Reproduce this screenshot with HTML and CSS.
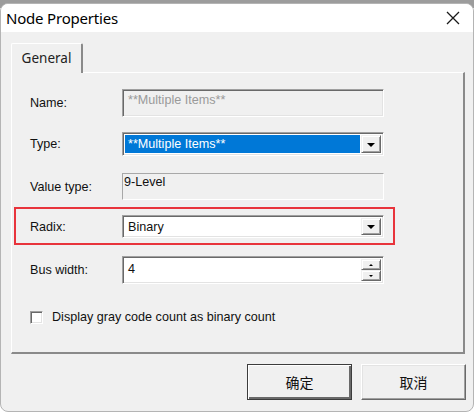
FILE: index.html
```html
<!DOCTYPE html>
<html>
<head>
<meta charset="utf-8">
<link rel="stylesheet" href="styles.css">
</head>
<body>
<div class="window">
  <div class="titlebar">
    <span class="title">Node Properties</span>
    <svg class="close" width="14" height="14" viewBox="0 0 14 14"><path d="M1 1L13 13M13 1L1 13" stroke="#1a1a1a" stroke-width="1.3" fill="none"/></svg>
  </div>
  <div class="content">
    <div class="tabs"><div class="tab">General</div></div>
    <div class="panel">
      <div class="row row-name">
        <span class="label">Name:</span>
        <div class="field sunken disabled"><span class="text-gray">**Multiple Items**</span></div>
      </div>
      <div class="row row-type">
        <span class="label">Type:</span>
        <div class="field sunken combo">
          <div class="combo-value selected">**Multiple Items**</div>
          <div class="btn3d arrow-btn"><span class="tri-down"></span></div>
        </div>
      </div>
      <div class="row row-value">
        <span class="label">Value type:</span>
        <div class="field static"><span>9-Level</span></div>
      </div>
      <div class="row row-radix">
        <span class="label">Radix:</span>
        <div class="field sunken combo">
          <div class="combo-value">Binary</div>
          <div class="btn3d arrow-btn"><span class="tri-down"></span></div>
        </div>
      </div>
      <div class="row row-bus">
        <span class="label">Bus width:</span>
        <div class="field sunken spin">
          <div class="spin-value">4</div>
          <div class="spin-btns">
            <div class="btn3d spin-btn"><span class="tri-up-s"></span></div>
            <div class="btn3d spin-btn"><span class="tri-down-s"></span></div>
          </div>
        </div>
      </div>
      <div class="row row-check">
        <span class="checkbox"></span>
        <span class="check-label">Display gray code count as binary count</span>
      </div>
    </div>
    <div class="buttons">
      <div class="button default">确定</div>
      <div class="button">取消</div>
    </div>
  </div>
</div>
</body>
</html>
```
FILE: styles.css
```css
html, body {
  margin: 0;
  padding: 0;
}
body {
  width: 474px;
  height: 412px;
  overflow: hidden;
  background: linear-gradient(#9c9c9c 0, #9c9c9c 8px, #ffffff 8px);
  font-family: "Liberation Sans", Arial, sans-serif;
  font-size: 12.6px;
  color: #111;
}
.window {
  box-sizing: border-box;
  margin-top: 3px;
  width: 474px;
  height: 409px;
  border: 1px solid #b4b4b4;
  border-radius: 8px;
  background: #f0f0f0;
  overflow: hidden;
  display: flex;
  flex-direction: column;
}
.titlebar {
  height: 28px;
  background: #ffffff;
  display: flex;
  align-items: center;
  justify-content: space-between;
  padding: 0 13px 0 5px;
  flex: none;
}
.title {
  font-family: "Noto Sans", "Open Sans", sans-serif;
  font-size: 15px;
  letter-spacing: -0.2px;
  color: #000;
  margin-top: -1px;
}
.close {
  display: block;
  margin-top: -1px;
}
.content {
  padding: 11px 7px 0 10px;
  display: flex;
  flex-direction: column;
}
.tabs {
  display: flex;
  height: 29px;
}
.tab {
  box-sizing: border-box;
  width: 72px;
  height: 30px;
  border-left: 1px solid #ffffff;
  border-top: 1px solid #ffffff;
  border-right: 2px solid #8a8a8a;
  border-radius: 2px 2px 0 0;
  background: #f0f0f0;
  font-family: "Noto Sans", "Open Sans", sans-serif;
  font-size: 13.5px;
  color: #222;
  display: flex;
  align-items: center;
  justify-content: center;
  padding-bottom: 2px;
  position: relative;
  z-index: 1;
}
.panel {
  box-sizing: border-box;
  width: 454px;
  height: 282px;
  border-top: 1px solid #ffffff;
  border-left: 1px solid #ffffff;
  border-right: 2px solid #8a8a8a;
  border-bottom: 2px solid #8a8a8a;
  display: flex;
  flex-direction: column;
}
.row {
  display: flex;
  align-items: center;
  padding-left: 18px;
  position: relative;
}
.label {
  width: 92px;
  flex: none;
}
.field {
  box-sizing: border-box;
  width: 262px;
  flex: none;
  position: relative;
}
.sunken {
  border-style: solid;
  border-width: 1px;
  border-color: #a0a0a0 #ffffff #ffffff #a0a0a0;
  box-shadow: inset 1px 1px #696969, inset -1px -1px #e3e3e3;
  background: #ffffff;
}
.disabled {
  background: #f0f0f0;
}
.static {
  border-style: solid;
  border-width: 1px;
  border-color: #a8a8a8 #ffffff #ffffff #a8a8a8;
  background: #f0f0f0;
}
.row-name { margin-top: 16px; }
.row-name .field { height: 28px; padding: 3px 0 0 5px; }
.text-gray { color: #9a9a9a; }

.row-type { margin-top: 15px; }
.combo {
  height: 23px;
  display: flex;
  align-items: stretch;
  padding: 2px 2px 2px 2px;
}
.row-type .combo { height: 24px; }
.combo-value {
  flex: 1;
  display: flex;
  align-items: center;
  padding-left: 3px;
  margin-right: 1px;
}
.selected {
  background: #0078d7;
  color: #ffffff;
}
.btn3d {
  box-sizing: border-box;
  background: #f0f0f0;
  border-style: solid;
  border-width: 1px;
  border-color: #f0f0f0 #696969 #696969 #f0f0f0;
  box-shadow: inset 1px 1px #ffffff, inset -1px -1px #a0a0a0;
  display: flex;
  align-items: center;
  justify-content: center;
}
.arrow-btn {
  width: 20px;
  flex: none;
}
.tri-down {
  width: 0;
  height: 0;
  border-left: 4px solid transparent;
  border-right: 4px solid transparent;
  border-top: 4px solid #000;
  margin-top: 1px;
}
.row-value { margin-top: 17px; }
.row-value .field { height: 27px; padding: 1px 0 0 1px; }

.row-radix { margin-top: 15px; }
.row-radix .combo { height: 23px; }
.row-radix .combo-value { padding-left: 3px; }
.row-radix::after {
  content: "";
  position: absolute;
  left: 2px;
  top: -8px;
  bottom: -7px;
  right: 68px;
  border: 2px solid #e8343c;
  pointer-events: none;
}
.row-bus { margin-top: 18px; }
.spin {
  height: 28px;
  display: flex;
  padding: 2px;
}
.spin-value {
  flex: 1;
  padding: 3px 0 0 3px;
}
.spin-btns {
  width: 20px;
  display: flex;
  flex-direction: column;
}
.spin-btn {
  flex: 1;
}
.tri-up-s {
  width: 0;
  height: 0;
  border-left: 2px solid transparent;
  border-right: 2px solid transparent;
  border-bottom: 2px solid #000;
}
.tri-down-s {
  width: 0;
  height: 0;
  border-left: 2px solid transparent;
  border-right: 2px solid transparent;
  border-top: 2px solid #000;
}
.row-check { margin-top: 26px; }
.checkbox {
  box-sizing: border-box;
  width: 13px;
  height: 13px;
  border-style: solid;
  border-width: 1px;
  border-color: #a0a0a0 #ffffff #ffffff #a0a0a0;
  box-shadow: inset 1px 1px #696969, inset -1px -1px #e3e3e3;
  background: #ffffff;
  flex: none;
}
.check-label {
  margin-left: 9px;
}
.buttons {
  display: flex;
  justify-content: flex-end;
  gap: 9px;
  margin-top: 10px;
}
.button {
  box-sizing: border-box;
  width: 105px;
  height: 36px;
  background: #f0f0f0;
  border-style: solid;
  border-width: 1px;
  border-color: #ffffff #696969 #696969 #ffffff;
  box-shadow: inset -1px -1px #a0a0a0, inset 1px 1px #e3e3e3;
  font-family: "Noto Sans CJK SC", sans-serif;
  font-size: 14px;
  display: flex;
  align-items: center;
  justify-content: center;
}
.button.default {
  border: 1px solid #3c3c3c;
  box-shadow: inset 1px 1px #ffffff, inset -2px -2px #696969;
}
```
